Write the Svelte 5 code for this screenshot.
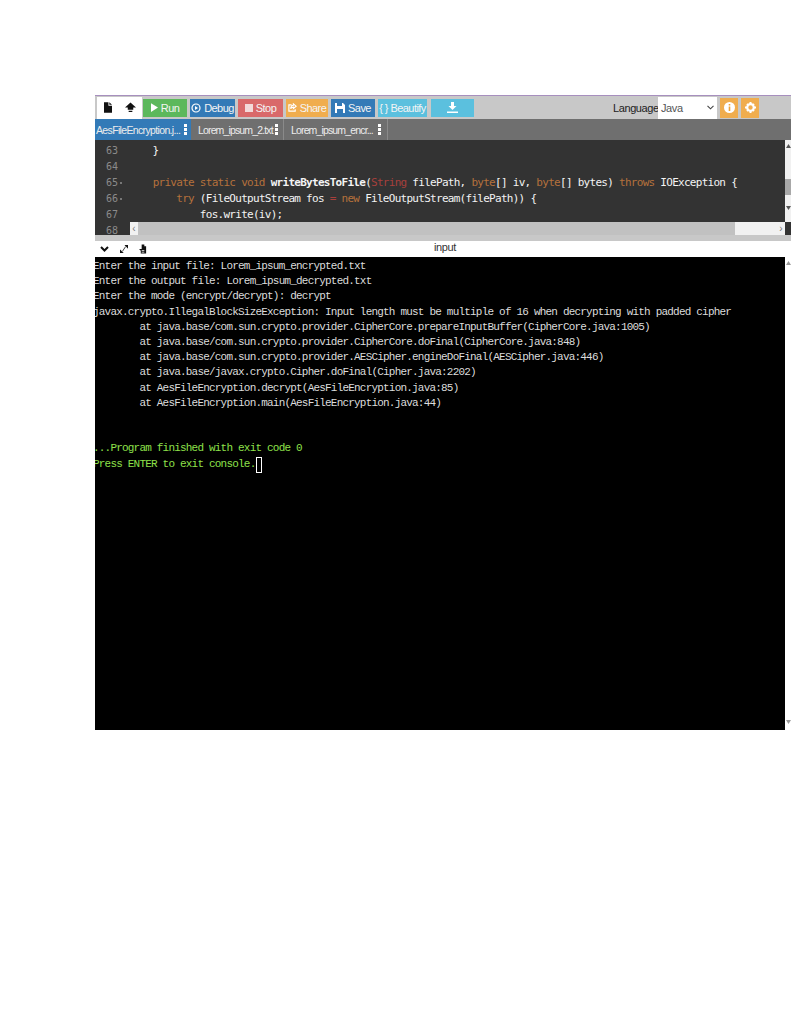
<script>
  const consoleLines = [
    'Enter the input file: Lorem_ipsum_encrypted.txt',
    'Enter the output file: Lorem_ipsum_decrypted.txt',
    'Enter the mode (encrypt/decrypt): decrypt',
    'javax.crypto.IllegalBlockSizeException: Input length must be multiple of 16 when decrypting with padded cipher',
    '        at java.base/com.sun.crypto.provider.CipherCore.prepareInputBuffer(CipherCore.java:1005)',
    '        at java.base/com.sun.crypto.provider.CipherCore.doFinal(CipherCore.java:848)',
    '        at java.base/com.sun.crypto.provider.AESCipher.engineDoFinal(AESCipher.java:446)',
    '        at java.base/javax.crypto.Cipher.doFinal(Cipher.java:2202)',
    '        at AesFileEncryption.decrypt(AesFileEncryption.java:85)',
    '        at AesFileEncryption.main(AesFileEncryption.java:44)'
  ];
  const tabs = [
    { name: 'AesFileEncryption.j...', active: true },
    { name: 'Lorem_ipsum_2.txt' },
    { name: 'Lorem_ipsum_encr...' }
  ];
</script>

<div class="page">
  <div class="ide">
    <div class="toolbar">
      <button class="icon-btn" aria-label="New">
        <svg width="8" height="11" viewBox="0 0 9 12"><path d="M0 0h5v4h4v8H0zM6 0l3 3H6z" fill="#111"/></svg>
      </button>
      <button class="icon-btn wide" aria-label="Upload">
        <svg width="11" height="11" viewBox="0 0 12 12"><path d="M6 0.500l6 5.500H9v2.500H3V6H0zM4 9.500h4V11H4z" fill="#111"/></svg>
      </button>
      <button class="btn green run"><svg width="7" height="9" viewBox="0 0 8 10"><path d="M0 0l8 5-8 5z" fill="#fff"/></svg>Run</button>
      <button class="btn blue debug"><svg width="10" height="10" viewBox="0 0 10 10"><circle cx="5" cy="5" r="4" fill="none" stroke="#fff" stroke-width="1.2"/><path d="M4 3l3 2-3 2z" fill="#fff"/></svg>Debug</button>
      <button class="btn red stop"><svg width="8" height="8" viewBox="0 0 8 8"><rect width="8" height="8" fill="#f3dada"/></svg>Stop</button>
      <button class="btn orange share"><svg width="9" height="9" viewBox="0 0 10 10"><path d="M8 7v2H1V2h3M6 1l3 2.500L6 6V4.500C4.500 4.500 3.500 5 3 6.500 3 4 4.500 2.500 6 2.500z" fill="none" stroke="#fff" stroke-width="1.300"/></svg>Share</button>
      <button class="btn blue save"><svg width="10" height="10" viewBox="0 0 10 10"><path d="M0 0h8l2 2v8H0zM2 0v3h5V0zM2 6v4h6V6z" fill="#fff" fill-rule="evenodd"/></svg>Save</button>
      <button class="btn cyan beautify">{'{ }'} Beautify</button>
      <button class="btn cyan download" aria-label="Download"><svg width="11" height="11" viewBox="0 0 11 11"><path d="M4 0h3v4h2.500L5.500 8 1.500 4H4zM0 9.500h11V11H0z" fill="#fff"/></svg></button>
      <span class="language">Language</span>
      <div class="select">Java
        <svg width="7" height="5" viewBox="0 0 7 5"><path d="M.5 .8l3 3 3-3" fill="none" stroke="#444" stroke-width="1.100"/></svg>
      </div>
      <button class="square" aria-label="Info"><svg width="11" height="11" viewBox="0 0 11 11"><circle cx="5.500" cy="5.500" r="5.500" fill="#fff"/><path d="M4.700 2h1.600v1.500H4.700zM4.700 4.500h1.600V9H4.700z" fill="#eea236"/></svg></button>
      <button class="square" aria-label="Settings"><svg width="11" height="11" viewBox="0 0 11 11"><circle cx="5.500" cy="5.500" r="3.300" fill="none" stroke="#fff" stroke-width="2.200"/><path d="M4.500 0h2v2h-2zM4.500 9h2v2h-2zM0 4.500h2v2H0zM9 4.500h2v2H9zM1.300 2.700l1.400-1.400 1.200 1.200-1.400 1.400zM8.300 1.300l1.400 1.400-1.200 1.200-1.400-1.400zM1.300 8.300l1.200-1.200 1.400 1.400-1.200 1.200zM7.100 8.500l1.400-1.400 1.200 1.200-1.400 1.400z" fill="#fff"/></svg></button>
    </div>

    <div class="tabs">
      {#each tabs as tab}
        <div class="tab" class:active={tab.active}>
          <span>{tab.name}</span>
          <svg width="3" height="11" viewBox="0 0 3 11"><path d="M0 0h3v3H0zM0 4h3v3H0zM0 8h3v3H0z" fill="#fff"/></svg>
        </div>
      {/each}
    </div>

    <div class="editor">
      <div class="editor-main">
        <div class="gutter">
          <div>63</div><div>64</div><div class="fold">65</div><div class="fold">66</div><div>67</div><div>68</div>
        </div>
        <pre class="code">    {'}'}

    <span class="kw">private static void</span> <b>writeBytesToFile</b>(<span class="str">String</span> filePath, <span class="kw">byte</span>[] iv, <span class="kw">byte</span>[] bytes) <span class="kw">throws</span> IOException {'{'}
        <span class="kw">try</span> (FileOutputStream fos <span class="str">=</span> <span class="kw">new</span> FileOutputStream(filePath)) {'{'}
            fos.write(iv);</pre>
        <div class="hscroll">
          <span class="arrow">‹</span>
          <div class="hthumb"></div>
          <span class="arrow right">›</span>
        </div>
      </div>
      <div class="vscroll">
        <svg class="up" width="5" height="4" viewBox="0 0 5 4"><path d="M2.500 0L5 4H0z" fill="#555"/></svg>
        <div class="vthumb"></div>
        <svg width="5" height="4" viewBox="0 0 5 4"><path d="M0 0h5L2.500 4z" fill="#555"/></svg>
        <div class="corner"></div>
      </div>
    </div>

    <div class="splitter"></div>

    <div class="io-bar">
      <div class="io-icons">
        <svg width="9" height="6" viewBox="0 0 9 6"><path d="M1 1l3.500 3.500L8 1" fill="none" stroke="#111" stroke-width="2"/></svg>
        <svg width="8" height="8" viewBox="0 0 10 10"><path d="M6 0h4v4zM0 10V6l4 4zM7 2L3 8" fill="#111" stroke="#111"/></svg>
        <svg width="8" height="10" viewBox="0 0 9 10"><path d="M3 0h3v2h2v8H2V7L0 5h3zM3 6v1h3V6zM3 8v1h3V8z" fill="#111" fill-rule="evenodd"/></svg>
      </div>
      <span class="input-label">input</span>
    </div>

    <div class="console-wrap">
      <div class="console">
        <pre class="console-text">{consoleLines.join('\n')}


<span class="green-text">...Program finished with exit code 0
Press ENTER to exit console.<span class="cursor"></span></span></pre>
      </div>
      <div class="console-scroll">
        <svg width="5" height="4" viewBox="0 0 5 4"><path d="M2.500 0L5 4H0z" fill="#999"/></svg>
        <svg width="5" height="4" viewBox="0 0 5 4"><path d="M0 0h5L2.500 4z" fill="#999"/></svg>
      </div>
    </div>
  </div>
</div>

<style>
  :global(body) { margin: 0; background: #fff; }
  .page {
    width: 791px;
    height: 1024px;
    padding: 95px 0 0 95px;
    box-sizing: border-box;
    overflow: hidden;
    font-family: "Liberation Sans", Arial, sans-serif;
  }
  .ide { width: 696px; }
  button { border: 0; padding: 0; margin: 0; font: inherit; }

  .toolbar {
    height: 23px;
    border-top: 1px solid #a78fbe;
    background: #c8c8c8;
    display: flex;
    align-items: center;
    padding-left: 2px;
  }
  .icon-btn {
    width: 22px;
    height: 22px;
    background: #fff;
    display: flex;
    align-items: center;
    justify-content: center;
    flex: none;
  }
  .icon-btn.wide { width: 23px; margin-right: 1px; }
  .btn {
    height: 18px;
    color: #f4f4f4;
    font-size: 11px;
    letter-spacing: -0.55px;
    white-space: nowrap;
    display: flex;
    align-items: center;
    justify-content: center;
    gap: 3px;
    margin-right: 3px;
    flex: none;
  }
  .green { background: #5cb85c; }
  .blue { background: #337ab7; }
  .red { background: #d9696a; }
  .orange { background: #f0ad4e; }
  .cyan { background: #5bc0de; }
  .run { width: 44px; }
  .debug { width: 45px; }
  .stop { width: 45px; }
  .share { width: 42px; }
  .save { width: 44px; }
  .beautify { width: 49px; margin-right: 4px; }
  .download { width: 43px; }
  .language {
    margin-left: 136px;
    width: 45px;
    flex: none;
    font-size: 11px;
    letter-spacing: -0.4px;
    color: #222;
  }
  .select {
    width: 59px;
    height: 22px;
    flex: none;
    background: #fff;
    color: #555;
    font-size: 11px;
    letter-spacing: -0.4px;
    display: flex;
    align-items: center;
    justify-content: space-between;
    padding: 0 3px 0 3px;
    box-sizing: border-box;
    margin-right: 3px;
  }
  .square {
    width: 18px;
    height: 20px;
    flex: none;
    background: #f0ad4e;
    margin-right: 3px;
    display: flex;
    align-items: center;
    justify-content: center;
  }

  .tabs {
    height: 21px;
    background: #6f6f6f;
    display: flex;
  }
  .tab {
    display: flex;
    align-items: center;
    justify-content: space-between;
    color: #ececec;
    font-size: 10.5px;
    letter-spacing: -0.85px;
    white-space: nowrap;
    border-right: 1px solid #8a8a8a;
    box-sizing: border-box;
    width: 93px;
    padding: 0 5px 0 7px;
  }
  .tab svg { flex: none; }
  .tab:nth-child(3) { width: 104px; padding-right: 6px; }
  .tab.active {
    width: 96px;
    background: #337ab7;
    border-right: 0;
    letter-spacing: -0.65px;
    padding: 0 4px 0 1px;
  }

  .editor {
    height: 95px;
    background: #333;
    display: flex;
  }
  .editor-main {
    position: relative;
    width: 690px;
    display: flex;
    overflow: hidden;
  }
  .gutter {
    width: 34px;
    flex: none;
    padding: 3px 0 0 11px;
    box-sizing: border-box;
    color: #8b8b8b;
    font: 10px/16px "DejaVu Sans Mono", monospace;
  }
  .fold { position: relative; }
  .fold::after {
    content: "";
    position: absolute;
    left: 14px;
    top: 7px;
    width: 2px;
    height: 2px;
    background: #777;
  }
  .code {
    margin: 0;
    padding: 3px 0 0 0;
    color: #f4f4f4;
    font: 400 11px/16px "DejaVu Sans Mono", monospace;
    letter-spacing: -0.72px;
    white-space: pre;
  }
  .code b { font-weight: 700; }
  .kw { color: #b5713c; }
  .str { color: #a8403c; }
  .hscroll {
    position: absolute;
    left: 35px;
    right: 0;
    bottom: 0;
    height: 13px;
    background: #f1f1f1;
    display: flex;
    align-items: center;
    color: #777;
    font-size: 10px;
    line-height: 10px;
  }
  .hscroll .arrow { width: 8px; text-align: center; }
  .hscroll .arrow.right { margin-left: auto; }
  .hthumb { width: 597px; height: 13px; background: #c1c1c1; }
  .vscroll {
    width: 6px;
    background: #f1f1f1;
    display: flex;
    flex-direction: column;
    align-items: center;
  }
  .vscroll svg { margin-top: 4px; flex: none; }
  .vthumb { width: 6px; height: 16px; margin-top: 31px; background: #a8a8a8; flex: none; }
  .vscroll svg:nth-of-type(2) { margin-top: 11px; }
  .corner { width: 6px; height: 13px; margin-top: auto; background: #333; flex: none; }

  .splitter { height: 6px; background: #c8c8c8; }

  .io-bar {
    position: relative;
    height: 16px;
    background: #fff;
    display: flex;
    align-items: center;
  }
  .io-icons { display: flex; align-items: center; gap: 11px; padding-left: 5px; }
  .input-label {
    position: absolute;
    left: 339px;
    top: 0;
    font-size: 11px;
    line-height: 12px;
    letter-spacing: -0.4px;
    color: #333;
  }

  .console-wrap { display: flex; height: 473px; }
  .console {
    width: 690px;
    flex: none;
    background: #000;
    overflow: hidden;
  }
  .console-text {
    margin: 0 0 0 -2px;
    padding-top: 2px;
    color: #dcdcdc;
    font: 11px/15.2px "Liberation Mono", "Courier New", monospace;
    letter-spacing: -0.8px;
    white-space: pre;
  }
  .green-text { color: #8ee04a; }
  .cursor {
    display: inline-block;
    width: 4px;
    height: 14px;
    margin: -2px 0 -2px 1px;
    border: 1px solid #fff;
    vertical-align: -4px;
  }
  .console-scroll {
    width: 6px;
    background: #fff;
    display: flex;
    flex-direction: column;
    justify-content: space-between;
    align-items: center;
    padding: 4px 0 6px;
    box-sizing: border-box;
  }
</style>
